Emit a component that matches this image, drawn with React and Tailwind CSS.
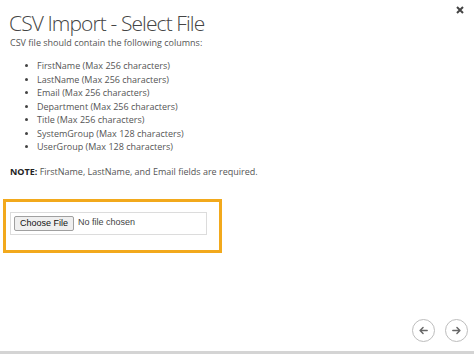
import React from 'react';

const columns = [
  'FirstName (Max 256 characters)',
  'LastName (Max 256 characters)',
  'Email (Max 256 characters)',
  'Department (Max 256 characters)',
  'Title (Max 256 characters)',
  'SystemGroup (Max 128 characters)',
  'UserGroup (Max 128 characters)',
];

function CircleButton({ dir }) {
  return (
    <button className="w-[23px] h-[23px] rounded-full border border-[#bdbdbd] flex items-center justify-center text-[#666] bg-white">
      <svg width="11" height="11" viewBox="0 0 12 12" fill="none" stroke="currentColor" strokeWidth="1.6" strokeLinecap="round" strokeLinejoin="round">
        {dir === 'left' ? (
          <path d="M10 6H2.5M5.5 2.8 2.3 6l3.2 3.2" />
        ) : (
          <path d="M2 6h7.5M6.5 2.8 9.7 6 6.5 9.2" />
        )}
      </svg>
    </button>
  );
}

export default function App() {
  return (
    <div className="w-[474px] h-[354px] bg-white relative flex flex-col overflow-hidden font-['Open_Sans','Segoe_UI',sans-serif] text-[#555]">
      {/* Close */}
      <button className="absolute top-[5px] right-[10px] w-[9px] h-[9px] flex items-center justify-center text-[#444]">
        <svg width="8" height="8" viewBox="0 0 8 8" stroke="currentColor" strokeWidth="2">
          <path d="M1 1l6 6M7 1 1 7" />
        </svg>
      </button>

      {/* Header */}
      <div className="px-[9px] pt-[11px]">
        <h1 className="text-[21px] leading-[25px] font-light text-[#444] tracking-[-0.9px]">CSV Import - Select File</h1>
        <p className="pl-[1px] text-[9px] leading-[14px]">CSV file should contain the following columns:</p>
      </div>

      {/* Columns list */}
      <ul className="mt-[9px] pl-[25px]">
        {columns.map(col => (
          <li key={col} className="flex items-center gap-[9px] text-[9px] leading-[13.5px]">
            <span className="w-[3px] h-[3px] rounded-full bg-[#444]" />
            <span>{col}</span>
          </li>
        ))}
      </ul>

      <p className="mt-[11px] px-[10px] text-[9px] leading-[14px]">
        <span className="font-bold text-[#222]">NOTE:</span> FirstName, LastName, and Email fields are required.
      </p>

      {/* File picker */}
      <div className="mt-[20px] ml-[3px] w-[219px] h-[54px] border-[3px] border-[#f2a91c] pt-[10px] pl-[4px]">
        <div className="w-[197px] h-[23px] border border-[#dcdcdc] flex items-center pl-[3px] gap-[4px] font-['Liberation_Sans',Arial,sans-serif] text-[9px] text-[#333]">
          <button className="h-[15px] px-[5px] bg-[#efefef] border border-[#a0a0a0] rounded-[2px] leading-none text-[#111]">Choose File</button>
          <span className="text-[#444]">No file chosen</span>
        </div>
      </div>

      <div className="flex-1" />

      {/* Footer nav */}
      <div className="flex justify-end gap-[10px] pr-[6px] pb-[9px]">
        <CircleButton dir="left" />
        <CircleButton dir="right" />
      </div>

      <div className="h-[3px] bg-[#d4d4d4]" />
    </div>
  );
}
